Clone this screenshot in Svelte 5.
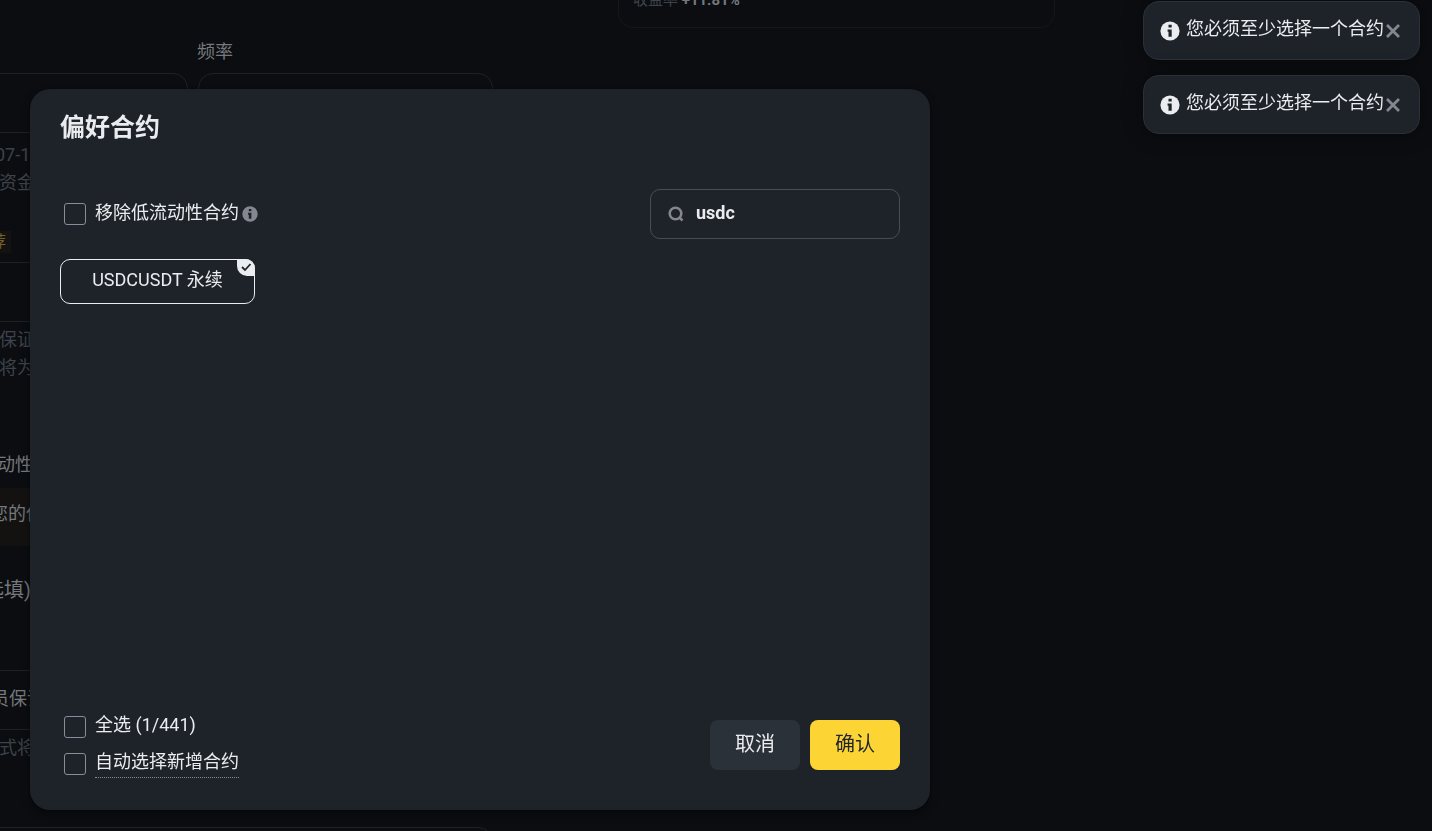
<script>
  let keyword = $state('usdc');
  let contracts = $state([{ name: 'USDCUSDT 永续', selected: true }]);
  let removeIlliquid = $state(false);
  let selectAll = $state(false);
  let autoSelect = $state(false);
  let open = $state(true);
  let toasts = $state([
    { id: 1, text: '您必须至少选择一个合约' },
    { id: 2, text: '您必须至少选择一个合约' }
  ]);

  const total = 441;
  let selectedCount = $derived(contracts.filter((c) => c.selected).length);
  let visible = $derived(
    contracts.filter((c) => c.name.toLowerCase().includes(keyword.toLowerCase()))
  );

  function closeToast(id) {
    toasts = toasts.filter((t) => t.id !== id);
  }
</script>

{#snippet info()}
  <svg class="info" viewBox="0 0 20 20" aria-hidden="true">
    <circle cx="10" cy="10" r="9.6" />
    <path d="M8.5 3.800h3.200v2.800h-3.200zM7.600 8.400h4.100v7.400H8.500v-5H7.600z" />
  </svg>
{/snippet}

<div class="page">
  <div class="form">
    <p class="field-label">频率</p>
    <div class="fields">
      <div class="field"></div>
      <div class="field"></div>
    </div>
    <div class="hint">
      <p class="date">07-10</p>
      <p>资金</p>
    </div>
    <div class="badge-row"><span class="badge">荐</span></div>
    <div class="field"></div>
    <div class="hint tight">
      <p>保证</p>
      <p>将为</p>
    </div>
    <p class="option">动性</p>
    <p class="notice">您的使</p>
    <p class="optional">选填)</p>
    <div class="field value">员保证</div>
    <div class="hint tight last"><p>式将</p></div>
    <div class="field"></div>
  </div>
  <div class="card">收益率 <b>+11.81%</b></div>
</div>

{#if open}
  <div class="overlay">
    <div class="modal" role="dialog" aria-labelledby="modal-title">
      <h2 id="modal-title">偏好合约</h2>

      <div class="toolbar">
        <label class="check">
          <input type="checkbox" bind:checked={removeIlliquid} />
          <span>移除低流动性合约</span>
          {@render info()}
        </label>
        <label class="search">
          <svg viewBox="0 0 16 16" aria-hidden="true">
            <circle cx="7.5" cy="7.5" r="5.8" />
            <path d="M11.500 11.500l3 3" />
          </svg>
          <input type="text" aria-label="搜索" bind:value={keyword} />
        </label>
      </div>

      <div class="contracts">
        {#each visible as contract}
          <button
            class="contract"
            class:selected={contract.selected}
            onclick={() => (contract.selected = !contract.selected)}
          >
            {contract.name}
            {#if contract.selected}
              <svg class="tick" viewBox="0 0 18 17" aria-hidden="true">
                <path class="corner" d="M0 0h9a9 9 0 0 1 9 9v8H10A10 10 0 0 1 0 7z" />
                <path class="mark" d="M5 8l3 3 5.500-6" />
              </svg>
            {/if}
          </button>
        {/each}
      </div>

      <div class="footer">
        <div class="checks">
          <label class="check">
            <input type="checkbox" bind:checked={selectAll} />
            <span>全选 ({selectedCount}/{total})</span>
          </label>
          <label class="check">
            <input type="checkbox" bind:checked={autoSelect} />
            <span class="dotted">自动选择新增合约</span>
          </label>
        </div>
        <div class="actions">
          <button class="btn" onclick={() => (open = false)}>取消</button>
          <button class="btn primary">确认</button>
        </div>
      </div>
    </div>
  </div>
{/if}

<div class="toasts">
  {#each toasts as toast (toast.id)}
    <div class="toast" role="alert">
      {@render info()}
      <span>{toast.text}</span>
      <button aria-label="关闭" onclick={() => closeToast(toast.id)}>
        <svg viewBox="0 0 16 16" aria-hidden="true"><path d="M2 2l12 12M14 2L2 14" /></svg>
      </button>
    </div>
  {/each}
</div>

<style>
  :global(body) {
    background: #0b0d10;
    color: #eaecef;
    font: 18px/28px Roboto, 'Noto Sans CJK SC', sans-serif;
    overflow: hidden;
  }
  :global(*) {
    box-sizing: border-box;
  }
  p,
  h2 {
    margin: 0;
  }
  button,
  input {
    font: inherit;
    color: inherit;
  }
  button {
    padding: 0;
    border: 0;
    background: none;
    cursor: pointer;
  }

  /* form behind the dialog, scrolled partly out of view */
  .page {
    display: flex;
    align-items: flex-start;
    gap: 125px;
    height: 100vh;
    overflow: hidden;
    color: #75787c;
  }
  .form {
    width: 600px;
    margin-left: -107px;
    flex: none;
  }
  .form p {
    padding-left: 106px;
  }
  .form .field-label {
    padding: 38px 0 7px 304px;
  }
  .fields {
    display: grid;
    grid-template-columns: 1fr 1fr;
    gap: 10px;
  }
  .field {
    height: 60px;
    border: 1px solid #1e2125;
    border-radius: 15px;
  }
  .field.value {
    padding: 14px 0 0 97px;
  }
  .hint {
    padding-top: 8px;
    color: #3d434b;
  }
  .hint.tight {
    padding-top: 4px;
  }
  .form .date {
    padding-left: 102px;
  }
  .badge-row {
    padding: 33px 0 9px 95px;
    line-height: 22px;
  }
  .badge {
    display: inline-block;
    padding: 0 5px 0 2px;
    background: #121211;
    color: #75602a;
    font-size: 16px;
  }
  .form .option {
    padding-top: 69px;
    padding-left: 104px;
  }
  .form .notice {
    margin-top: 9px;
    padding-top: 12px;
    padding-bottom: 18px;
    padding-left: 97px;
    background: #131211;
  }
  .form .optional {
    padding-top: 30px;
    padding-bottom: 66px;
    padding-left: 91px;
    font-size: 20px;
  }
  .hint.last {
    padding-bottom: 65px;
  }
  .card {
    width: 437px;
    margin-top: -41px;
    padding: 26px 14px 13px;
    border: 1px solid #14171a;
    border-radius: 15px;
    color: #3d434b;
    font-size: 15px;
  }
  .card b {
    color: #75787c;
  }

  .overlay {
    position: fixed;
    inset: 0;
    display: flex;
    padding: 89px 30px 21px;
  }
  .modal {
    display: flex;
    flex-direction: column;
    width: 100%;
    max-width: 900px;
    padding: 21px 30px 32px;
    border-radius: 20px;
    background: #1e2329;
    box-shadow: 0 4px 8px #0006, 0 0 2px #0008;
  }
  h2 {
    font-size: 25px;
    line-height: 36px;
  }
  .toolbar {
    display: flex;
    align-items: center;
    justify-content: space-between;
    margin: 43px 0 20px;
  }
  .check {
    display: flex;
    align-items: center;
    gap: 9px;
    padding-left: 4px;
  }
  .check input {
    appearance: none;
    width: 22px;
    height: 22px;
    margin: 0;
    border: 1px solid #848e9c;
    border-radius: 3px;
  }
  .check input:checked {
    background: #eaecef;
  }
  .check span {
    padding-bottom: 3px;
  }
  .check .dotted {
    line-height: 25px;
    border-bottom: 1px dotted #848e9c;
  }
  .info {
    width: 20px;
    height: 20px;
    flex: none;
    fill: #eaecef;
  }
  .info path {
    fill: #1e2329;
  }
  .check .info {
    width: 16px;
    height: 16px;
    margin-left: -6px;
    fill: #848691;
  }
  .search {
    display: flex;
    align-items: center;
    gap: 12px;
    width: 250px;
    height: 50px;
    padding: 0 17px;
    border: 1px solid #474d57;
    border-radius: 10px;
  }
  .search svg {
    width: 16px;
    height: 16px;
    flex: none;
    fill: none;
    stroke: #848691;
    stroke-width: 2.5;
  }
  .search input {
    min-width: 0;
    flex: 1;
    padding: 0 0 3px;
    border: 0;
    outline: 0;
    background: none;
    font-weight: 700;
  }
  .contracts {
    flex: 1;
    display: grid;
    grid-template-columns: repeat(4, 1fr);
    gap: 20px;
    align-content: start;
  }
  .contract {
    position: relative;
    height: 45px;
    padding-bottom: 3px;
    border: 1px solid #474d57;
    border-radius: 10px;
  }
  .contract.selected {
    border-color: #eaecef;
  }
  .tick {
    position: absolute;
    top: -1px;
    right: -1px;
    width: 18px;
    height: 17px;
  }
  .corner {
    fill: #eaecef;
  }
  .mark {
    fill: none;
    stroke: #1e2329;
    stroke-width: 1.8;
  }
  .footer {
    display: flex;
    align-items: flex-end;
    justify-content: space-between;
  }
  .checks {
    display: grid;
    gap: 7px;
  }
  .actions {
    display: flex;
    gap: 10px;
    padding-bottom: 8px;
  }
  .btn {
    width: 90px;
    height: 50px;
    padding-bottom: 2px;
    border-radius: 8px;
    background: #2b3139;
    font-size: 20px;
  }
  .btn.primary {
    background: #fcd535;
    color: #202630;
  }

  .toasts {
    position: fixed;
    top: 1px;
    right: 12px;
    display: grid;
    gap: 15px;
  }
  .toast {
    display: flex;
    align-items: center;
    height: 59px;
    padding: 0 18px 0 16px;
    border: 1px solid #2b3139;
    border-radius: 16px;
    background: #1e2329;
    box-shadow: 0 0 20px #0006;
  }
  .toast span {
    padding: 0 1px 4px 6px;
  }
  .toast svg {
    display: block;
  }
  .toast button svg {
    width: 16px;
    height: 16px;
    stroke: #848691;
    stroke-width: 2.8;
  }
</style>
